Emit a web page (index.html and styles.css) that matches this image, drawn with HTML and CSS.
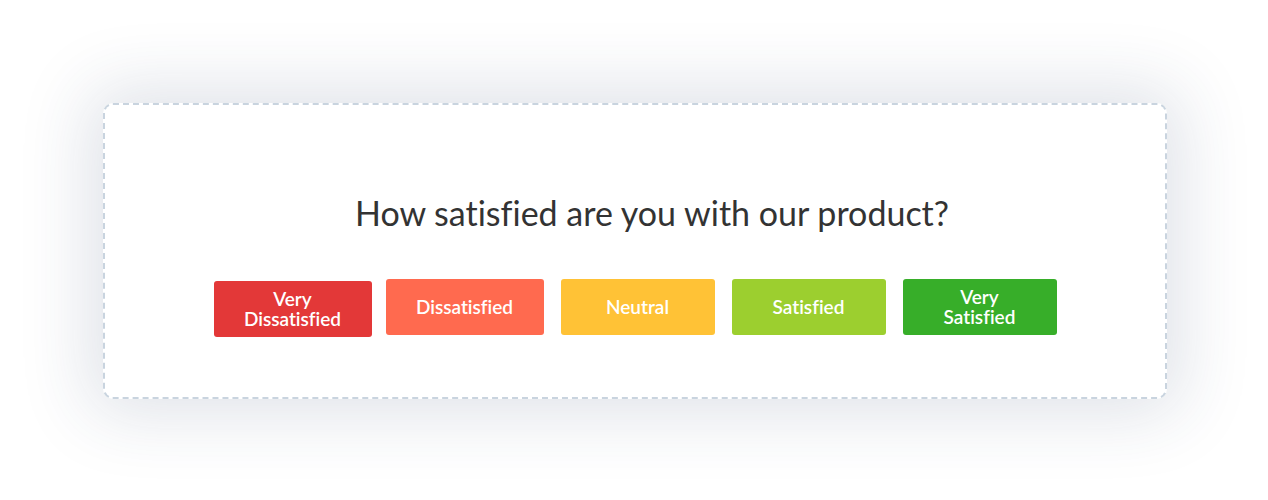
FILE: index.html
```html
<!DOCTYPE html>
<html lang="en">
<head>
    <meta charset="UTF-8">
    <meta name="viewport" content="width=device-width, initial-scale=1.0">
    <title>Survey</title>
    <link rel="stylesheet" href="styles.css">
</head>
<body>
    <div class="survey-card">
        <div class="question">How satisfied are you with our product?</div>
        <div class="answers">
            <button class="answer very-dissatisfied">Very<br>Dissatisfied</button>
            <button class="answer dissatisfied">Dissatisfied</button>
            <button class="answer neutral">Neutral</button>
            <button class="answer satisfied">Satisfied</button>
            <button class="answer very-satisfied">Very<br>Satisfied</button>
        </div>
    </div>
</body>
</html>
```
FILE: styles.css
```css
html {
    background-color: #fff;
}
body {
    font-family: "Source Sans Pro", Lato, "Noto Sans", sans-serif;
    font-variant-ligatures: none;
    margin: 0;
    padding: 103px 0 101px;
}
.survey-card {
    box-sizing: border-box;
    width: 1064px;
    height: 296px;
    margin: 0 0 0 103px;
    padding-top: 87px;
    background-color: #fff;
    border: 2px dashed #c9d4df;
    border-radius: 10px;
    box-shadow: 0 0 70px 14px rgba(40, 60, 100, 0.15);
}
.question {
    text-align: center;
    padding-left: 34px;
    font-size: 34px;
    line-height: 42px;
    color: #333;
}
.answers {
    display: flex;
    justify-content: center;
    align-items: flex-start;
    gap: 17px;
    margin-top: 45px;
}
.answer {
    width: 154px;
    height: 56px;
    padding: 0;
    border: none;
    border-radius: 3px;
    color: #fff;
    font-family: inherit;
    font-variant-ligatures: none;
    font-size: 19px;
    font-weight: 600;
    line-height: 20px;
    cursor: pointer;
}
.very-dissatisfied {
    width: 158px;
    margin-top: 2px;
    margin-right: -3px;
    background-color: #e33838;
}
.dissatisfied {
    width: 158px;
    background-color: #ff6a4f;
}
.neutral {
    background-color: #ffc236;
}
.satisfied {
    background-color: #9ccf2f;
}
.very-satisfied {
    background-color: #37ae29;
}
```
